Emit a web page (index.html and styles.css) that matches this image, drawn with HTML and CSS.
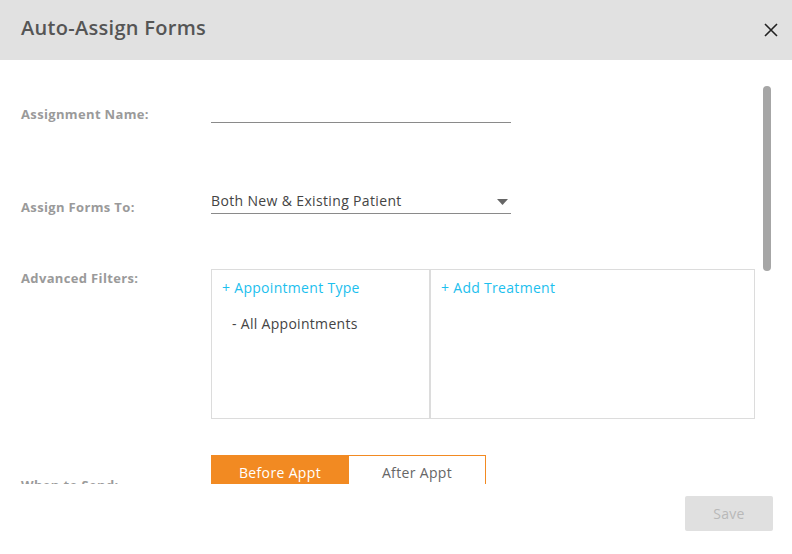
FILE: index.html
```html
<!DOCTYPE html>
<html>
<head>
<meta charset="utf-8">
<link rel="stylesheet" href="styles.css">
</head>
<body>
<div class="modal">
  <header class="modal-header">
    <h1 class="modal-title">Auto-Assign Forms</h1>
    <button class="close-btn" aria-label="Close">
      <svg width="14" height="14" viewBox="0 0 14 14"><path d="M1 1 L13 13 M13 1 L1 13" stroke="#222" stroke-width="1.6" fill="none"/></svg>
    </button>
  </header>
  <div class="modal-body">
    <div class="form">
      <div class="row row-name">
        <label class="label">Assignment Name:</label>
        <div class="text-input"></div>
      </div>
      <div class="row row-assign">
        <label class="label">Assign Forms To:</label>
        <div class="select">
          <span>Both New &amp; Existing Patient</span>
          <svg class="caret" width="11" height="6" viewBox="0 0 11 6"><path d="M0 0 H11 L5.5 6 Z" fill="#666"/></svg>
        </div>
      </div>
      <div class="row row-filters">
        <label class="label">Advanced Filters:</label>
        <div class="filter-box">
          <div class="filter-col col-appt">
            <div class="add-link">+ Appointment Type</div>
            <div class="filter-item">- All Appointments</div>
          </div>
          <div class="filter-col col-treat">
            <div class="add-link">+ Add Treatment</div>
          </div>
        </div>
      </div>
      <div class="row row-when">
        <label class="label">When to Send:</label>
        <div class="toggle">
          <div class="toggle-opt active">Before Appt</div>
          <div class="toggle-opt">After Appt</div>
        </div>
      </div>
      <div class="spacer"></div>
    </div>
    <div class="scroll-thumb"></div>
  </div>
  <footer class="modal-footer">
    <button class="save-btn">Save</button>
  </footer>
</div>
</body>
</html>
```

FILE: styles.css
```css
* { box-sizing: border-box; }
html, body {
  margin: 0;
  padding: 0;
  background: #fff;
  font-family: "Open Sans", "Liberation Sans", sans-serif;
}
.modal {
  width: 792px;
  height: 554px;
  display: flex;
  flex-direction: column;
  background: #fff;
}
.modal-header {
  height: 60px;
  flex: none;
  background: #e1e1e1;
  display: flex;
  align-items: center;
  justify-content: space-between;
  padding: 0 14px 0 21px;
}
.modal-title {
  margin: 0;
  font-size: 20px;
  font-weight: 600;
  color: #555;
  letter-spacing: 0.3px;
  padding-bottom: 5px;
}
.close-btn {
  background: none;
  border: none;
  padding: 0;
  width: 14px;
  height: 14px;
  display: flex;
}
.modal-body {
  position: relative;
  height: 424px;
  flex: none;
  overflow: hidden;
}
.form {
  padding-left: 21px;
}
.row {
  display: grid;
  grid-template-columns: 190px auto;
  align-items: start;
}
.label {
  font-size: 13px;
  font-weight: 700;
  color: #9a9a9a;
  line-height: 16px;
  letter-spacing: 0.35px;
}
.row-name { margin-top: 40px; }
.row-name .label { padding-top: 6px; }
.text-input {
  width: 300px;
  height: 23px;
  border-bottom: 1px solid #8a8a8a;
}
.row-assign { margin-top: 68px; }
.row-assign .label { padding-top: 8px; }
.select {
  width: 300px;
  height: 23px;
  border-bottom: 1px solid #8a8a8a;
  display: flex;
  align-items: center;
  justify-content: space-between;
  font-size: 14px;
  letter-spacing: 0.35px;
  color: #444;
  padding-right: 3px;
  padding-bottom: 3px;
}
.caret { margin-top: 2px; }
.row-filters { margin-top: 54px; }
.row-filters .label { padding-top: 1px; }
.filter-box {
  width: 544px;
  height: 150px;
  border: 1px solid #dcdcdc;
  display: flex;
}
.filter-col {
  padding: 10px 10px;
  font-size: 14px;
  line-height: 16px;
  letter-spacing: 0.3px;
}
.col-appt {
  width: 219px;
  border-right: 2px solid #dcdcdc;
}
.col-treat { flex: 1; }
.add-link {
  color: #1cc0ee;
}
.filter-item {
  color: #444;
  margin-top: 20px;
  padding-left: 10px;
}
.row-when { margin-top: 36px; }
.row-when .label { padding-top: 22px; }
.toggle {
  display: flex;
  width: 275px;
  height: 36px;
}
.toggle-opt {
  flex: 1;
  display: flex;
  align-items: center;
  justify-content: center;
  font-size: 14px;
  letter-spacing: 0.35px;
  color: #666;
  border: 1px solid #f28a22;
  border-left: none;
  background: #fff;
  padding-bottom: 2px;
}
.toggle-opt.active {
  background: #f28a22;
  color: #fff;
  border: none;
  width: 138px;
  flex: none;
}
.spacer { height: 400px; }
.scroll-thumb {
  position: absolute;
  top: 26px;
  left: 763px;
  width: 8px;
  height: 185px;
  border-radius: 4px;
  background: #a6a6a6;
}
.modal-footer {
  flex: 1;
  display: flex;
  justify-content: flex-end;
  align-items: flex-start;
  padding: 12px 19px 0 0;
}
.save-btn {
  width: 88px;
  height: 35px;
  background: #e0e0e0;
  border: none;
  border-radius: 2px;
  color: #b8b8b8;
  font-family: "Open Sans", "Liberation Sans", sans-serif;
  font-size: 14px;
  letter-spacing: 0.3px;
}
```
